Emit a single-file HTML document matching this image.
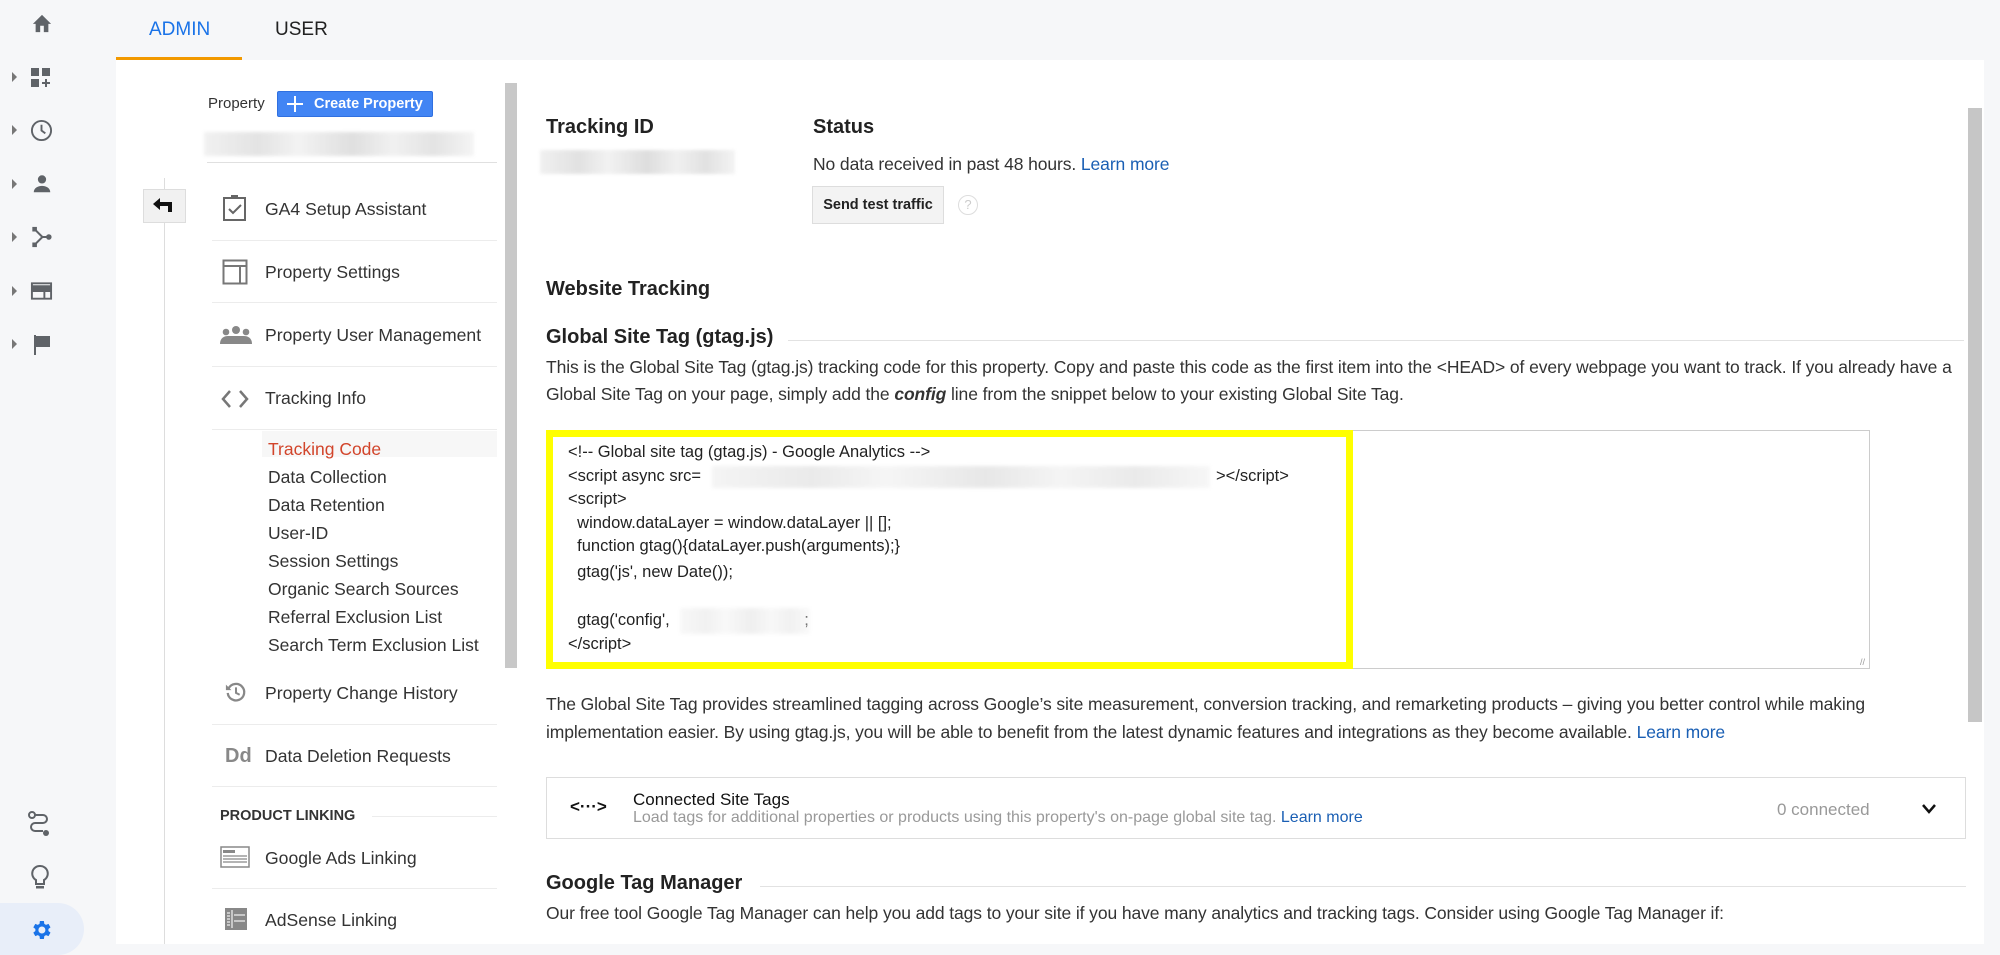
<!DOCTYPE html>
<html><head><meta charset="utf-8">
<style>
*{margin:0;padding:0;box-sizing:border-box}
body{width:2000px;height:955px;overflow:hidden;background:#f6f7f9;font-family:"Liberation Sans",Arial,sans-serif;color:#212121;position:relative}
.a{position:absolute;white-space:nowrap}
.ic{position:absolute;fill:#5f6368}
.tri{position:absolute;left:12px;width:0;height:0;border-left:5px solid #777;border-top:5px solid transparent;border-bottom:5px solid transparent}
.sep{position:absolute;height:1px;background:#ececec}
.mi{position:absolute;font-size:17.6px;color:#333;left:265px}
.sub{position:absolute;left:268px;font-size:17.5px;color:#333}
.blur{position:absolute;background:linear-gradient(90deg,#eee,#ddd 20%,#f0f0f0 35%,#d8d8d8 55%,#eee 70%,#ddd 85%,#f2f2f2);filter:blur(1.5px)}
.p{font-size:17.5px;color:#333;letter-spacing:-0.1px}
.code{position:absolute;left:568px;font-size:16.5px;color:#222}
a,.lk{color:#1a5fb4}
</style></head><body>
<!-- sidebar -->
<svg class="ic" style="left:31px;top:13px" width="22" height="20" viewBox="0 0 24 22"><path d="M10 21v-7h4v7h5v-9h3L12 2 2 12h3v9z"/></svg>
<div class="tri" style="top:72px"></div>
<svg class="ic" style="left:30px;top:67px" width="22" height="22" viewBox="0 0 22 22"><rect x="1" y="1" width="8" height="8"/><rect x="12" y="1" width="8" height="8"/><rect x="1" y="12" width="8" height="8"/><path d="M15 12h2v3h3v2h-3v3h-2v-3h-3v-2h3z"/></svg>
<div class="tri" style="top:125px"></div>
<svg class="ic" style="left:30px;top:119px" width="23" height="23" viewBox="0 0 24 24"><circle cx="12" cy="12" r="10" fill="none" stroke="#5f6368" stroke-width="2"/><path d="M12 6v6l4 3" fill="none" stroke="#5f6368" stroke-width="2"/></svg>
<div class="tri" style="top:179px"></div>
<svg class="ic" style="left:31px;top:173px" width="22" height="22" viewBox="0 0 24 24"><circle cx="12" cy="7" r="4.5"/><path d="M3 21c0-5 5-7 9-7s9 2 9 7z"/></svg>
<div class="tri" style="top:232px"></div>
<svg class="ic" style="left:30px;top:226px" width="23" height="22" viewBox="0 0 24 24"><rect x="2" y="1" width="5" height="5"/><rect x="2" y="18" width="5" height="5"/><circle cx="20" cy="12" r="3"/><path d="M5 4l8 8-8 8M12 12h7" fill="none" stroke="#5f6368" stroke-width="2.2"/></svg>
<div class="tri" style="top:286px"></div>
<svg class="ic" style="left:30px;top:281px" width="23" height="20" viewBox="0 0 24 20"><path d="M1 1h22v18H1z M3 6v11h11V11H3V6z M16 11v6h5v-6z M3 3v1h18V3z" fill-rule="evenodd"/></svg>
<div class="tri" style="top:339px"></div>
<svg class="ic" style="left:33px;top:334px" width="19" height="22" viewBox="0 0 19 22"><path d="M1 1h2v20H1zM3 2h14v11H3z"/></svg>
<svg class="ic" style="left:27px;top:811px" width="24" height="26" viewBox="0 0 24 26"><circle cx="5" cy="4" r="3" fill="none" stroke="#5f6368" stroke-width="2"/><circle cx="19" cy="22" r="3"/><path d="M8 4h8a4 4 0 010 8H8a4 4 0 000 8h8" fill="none" stroke="#5f6368" stroke-width="2"/></svg>
<svg class="ic" style="left:30px;top:864px" width="20" height="27" viewBox="0 0 20 27"><path d="M10 2a7.5 7.5 0 00-4 14v4h8v-4a7.5 7.5 0 00-4-14z" fill="none" stroke="#5f6368" stroke-width="2"/><rect x="6" y="22" width="8" height="2.5"/></svg>
<div class="a" style="left:0;top:903px;width:84px;height:52px;background:#e8eef9;border-radius:0 26px 26px 0"></div>
<svg class="ic" style="left:29px;top:918px;fill:#1a73e8" width="24" height="24" viewBox="0 0 24 24"><path d="M19.4 13a7.5 7.5 0 000-2l2.1-1.6-2-3.5-2.5 1a7.3 7.3 0 00-1.7-1L14.9 3h-4l-.4 2.9a7.3 7.3 0 00-1.7 1l-2.5-1-2 3.5L6.4 11a7.5 7.5 0 000 2l-2.1 1.6 2 3.5 2.5-1c.5.4 1.1.7 1.7 1l.4 2.9h4l.4-2.9c.6-.3 1.2-.6 1.7-1l2.5 1 2-3.5zM12.9 15.5a3.5 3.5 0 110-7 3.5 3.5 0 010 7z"/></svg>
<!-- tabs -->
<div class="a" style="left:149px;top:19px;font-size:19px;color:#1a73e8">ADMIN</div>
<div class="a" style="left:275px;top:19px;font-size:19px;color:#222">USER</div>
<div class="a" style="left:116px;top:57px;width:126px;height:3px;background:#f29900"></div>
<!-- main panel -->
<div class="a" style="left:116px;top:60px;width:1868px;height:884px;background:#fff"></div>
<!-- left nav -->
<div class="a" style="left:208px;top:95px;font-size:15px;color:#333">Property</div>
<div class="a" style="left:277px;top:91px;width:156px;height:26px;background:#4285f4;border:1px solid #3070e0;border-radius:2px;color:#fff;font-size:14.5px;font-weight:bold;line-height:24px;padding-left:36px">Create Property</div>
<div class="a" style="left:287px;top:103px;width:16px;height:2px;background:#fff"></div>
<div class="a" style="left:294px;top:96px;width:2px;height:16px;background:#fff"></div>
<div class="blur" style="left:204px;top:132px;width:270px;height:24px;opacity:.8"></div>
<div class="sep" style="left:207px;top:162px;width:290px;background:#e0e0e0"></div>
<div class="a" style="left:164px;top:178px;width:1px;height:766px;background:#ddd"></div>
<div class="a" style="left:143px;top:189px;width:43px;height:34px;background:#f1f1f1;border:1px solid #ddd"></div>
<svg class="a" style="left:152px;top:197px" width="24" height="16" viewBox="0 0 24 16"><path d="M1 7l7-6v4h12v10h-4V9H8v4z" fill="#111"/></svg>
<svg class="a" style="left:222px;top:194px" width="26" height="28" viewBox="0 0 26 28"><rect x="2" y="4" width="21" height="22" fill="none" stroke="#666" stroke-width="2"/><rect x="9" y="1" width="7" height="4" fill="#666"/><path d="M7 15l4 4 8-8" fill="none" stroke="#666" stroke-width="2"/></svg>
<div class="mi" style="top:199px">GA4 Setup Assistant</div>
<div class="sep" style="left:212px;top:240px;width:285px"></div>
<svg class="a" style="left:222px;top:259px" width="26" height="26" viewBox="0 0 26 26"><rect x="1.5" y="1.5" width="23" height="23" fill="none" stroke="#777" stroke-width="2"/><path d="M1.5 7h23M18 7v17" stroke="#777" stroke-width="2"/></svg>
<div class="mi" style="top:262px">Property Settings</div>
<div class="sep" style="left:212px;top:302px;width:285px"></div>
<svg class="a" style="left:220px;top:325px" width="32" height="20" viewBox="0 0 32 20"><circle cx="16" cy="5" r="4" fill="#888"/><circle cx="6" cy="7" r="3.3" fill="#888"/><circle cx="26" cy="7" r="3.3" fill="#888"/><path d="M0 19c0-6 4-8 8-8h16c4 0 8 2 8 8z" fill="#888"/></svg>
<div class="mi" style="top:325px">Property User Management</div>
<div class="sep" style="left:212px;top:366px;width:285px"></div>
<svg class="a" style="left:221px;top:389px" width="28" height="20" viewBox="0 0 28 20"><path d="M9 2L2 10l7 8M19 2l7 8-7 8" fill="none" stroke="#777" stroke-width="2.5"/></svg>
<div class="mi" style="top:388px">Tracking Info</div>
<div class="sep" style="left:212px;top:429px;width:285px"></div>
<div class="a" style="left:262px;top:431px;width:235px;height:26px;background:#f7f7f7"></div>
<div class="sub" style="top:439px;color:#d2452b">Tracking Code</div>
<div class="sub" style="top:467px">Data Collection</div>
<div class="sub" style="top:495px">Data Retention</div>
<div class="sub" style="top:523px">User-ID</div>
<div class="sub" style="top:551px">Session Settings</div>
<div class="sub" style="top:579px">Organic Search Sources</div>
<div class="sub" style="top:607px">Referral Exclusion List</div>
<div class="sub" style="top:635px">Search Term Exclusion List</div>
<svg class="a" style="left:225px;top:681px" width="22" height="22" viewBox="0 0 24 24"><path d="M4 8a9 9 0 11-1 5" fill="none" stroke="#888" stroke-width="2.5"/><path d="M1 4v6h6z" fill="#888"/><path d="M12 7v6l4 2" fill="none" stroke="#888" stroke-width="2.2"/></svg>
<div class="mi" style="top:683px">Property Change History</div>
<div class="sep" style="left:212px;top:724px;width:285px"></div>
<div class="a" style="left:225px;top:745px;font-size:20px;font-weight:bold;color:#888">Dd</div>
<div class="mi" style="top:746px">Data Deletion Requests</div>
<div class="sep" style="left:212px;top:786px;width:285px"></div>
<div class="a" style="left:220px;top:808px;font-size:14.5px;font-weight:bold;color:#333">PRODUCT LINKING</div>
<div class="sep" style="left:372px;top:816px;width:125px"></div>
<svg class="a" style="left:220px;top:846px" width="30" height="22" viewBox="0 0 30 22"><rect x="1" y="1" width="28" height="20" fill="none" stroke="#888" stroke-width="1.5"/><rect x="3" y="4" width="12" height="3" fill="#888"/><path d="M3 10h24M3 13h24M3 16h24" stroke="#888" stroke-width="1.3"/></svg>
<div class="mi" style="top:848px">Google Ads Linking</div>
<div class="sep" style="left:212px;top:888px;width:285px"></div>
<svg class="a" style="left:224px;top:907px" width="24" height="24" viewBox="0 0 24 24"><rect x="1" y="1" width="22" height="22" fill="#888"/><path d="M8 3v18M10 8h11M10 14h11M3 6h3M3 9h3M3 12h3M3 15h3M3 18h3" stroke="#ddd" stroke-width="1.5"/></svg>
<div class="mi" style="top:910px">AdSense Linking</div>
<div class="a" style="left:505px;top:83px;width:12px;height:585px;background:#c8c8c8"></div>
<!-- content -->
<div class="a" style="left:546px;top:116px;font-size:20px;font-weight:bold;color:#222">Tracking ID</div>
<div class="blur" style="left:540px;top:150px;width:195px;height:24px;opacity:.85"></div>
<div class="a" style="left:813px;top:116px;font-size:20px;font-weight:bold;color:#222">Status</div>
<div class="a p" style="left:813px;top:154px">No data received in past 48 hours. <span class="lk">Learn more</span></div>
<div class="a" style="left:812px;top:186px;width:132px;height:38px;background:#f3f3f3;border:1px solid #ddd;font-size:14.5px;font-weight:bold;line-height:36px;text-align:center;color:#222">Send test traffic</div>
<div class="a" style="left:958px;top:195px;width:20px;height:20px;border:1.5px solid #ddd;border-radius:50%;font-size:13px;color:#ccc;text-align:center;line-height:17px">?</div>
<div class="a" style="left:546px;top:278px;font-size:20px;font-weight:bold;color:#222">Website Tracking</div>
<div class="a" style="left:546px;top:326px;font-size:20px;font-weight:bold;color:#222">Global Site Tag (gtag.js)</div>
<div class="sep" style="left:788px;top:340px;width:1176px;background:#e2e2e2"></div>
<div class="a p" style="left:546px;top:357px">This is the Global Site Tag (gtag.js) tracking code for this property. Copy and paste this code as the first item into the &lt;HEAD&gt; of every webpage you want to track. If you already have a</div>
<div class="a p" style="left:546px;top:384px">Global Site Tag on your page, simply add the <b><i>config</i></b> line from the snippet below to your existing Global Site Tag.</div>
<div class="a" style="left:546px;top:430px;width:1324px;height:239px;border:1px solid #ccc"></div>
<div class="a" style="left:546px;top:430px;width:807px;height:239px;border:7px solid #ffff00"></div>
<div class="a" style="left:1860px;top:657px;font-size:9px;color:#999">//</div>
<div class="code" style="top:443px">&lt;!-- Global site tag (gtag.js) - Google Analytics --&gt;</div>
<div class="code" style="top:467px">&lt;script async src=<span style="display:inline-block;width:515px"></span>&gt;&lt;/script&gt;</div>
<div class="blur" style="left:712px;top:466px;width:498px;height:22px;opacity:.6"></div>
<div class="code" style="top:490px">&lt;script&gt;</div>
<div class="code" style="top:514px">&nbsp; window.dataLayer = window.dataLayer || [];</div>
<div class="code" style="top:537px">&nbsp; function gtag(){dataLayer.push(arguments);}</div>
<div class="code" style="top:563px">&nbsp; gtag('js', new Date());</div>
<div class="code" style="top:611px">&nbsp; gtag('config', <span style="display:inline-block;width:130px"></span>;</div>
<div class="blur" style="left:680px;top:608px;width:130px;height:26px;opacity:.4"></div>
<div class="code" style="top:635px">&lt;/script&gt;</div>
<div class="a p" style="left:546px;top:694px">The Global Site Tag provides streamlined tagging across Google’s site measurement, conversion tracking, and remarketing products – giving you better control while making</div>
<div class="a p" style="left:546px;top:722px">implementation easier. By using gtag.js, you will be able to benefit from the latest dynamic features and integrations as they become available. <span class="lk">Learn more</span></div>
<div class="a" style="left:546px;top:777px;width:1420px;height:62px;border:1px solid #ddd"></div>
<div class="a" style="left:570px;top:797px;font-size:17px;font-weight:bold;color:#111">&lt;···&gt;</div>
<div class="a" style="left:633px;top:790px;font-size:17px;color:#111">Connected Site Tags</div>
<div class="a" style="left:633px;top:809px;font-size:16px;color:#999">Load tags for additional properties or products using this property's on-page global site tag. <span class="lk">Learn more</span></div>
<div class="a" style="left:1777px;top:800px;font-size:17px;color:#999">0 connected</div>
<svg class="a" style="left:1921px;top:803px" width="16" height="12" viewBox="0 0 16 12"><path d="M2 2l6 7 6-7" fill="none" stroke="#111" stroke-width="2.5"/></svg>
<div class="a" style="left:546px;top:872px;font-size:20px;font-weight:bold;color:#222">Google Tag Manager</div>
<div class="sep" style="left:760px;top:886px;width:1206px;background:#e2e2e2"></div>
<div class="a p" style="left:546px;top:903px">Our free tool Google Tag Manager can help you add tags to your site if you have many analytics and tracking tags. Consider using Google Tag Manager if:</div>
<div class="a" style="left:1968px;top:108px;width:14px;height:614px;background:#c6c6c6"></div>
</body></html>
